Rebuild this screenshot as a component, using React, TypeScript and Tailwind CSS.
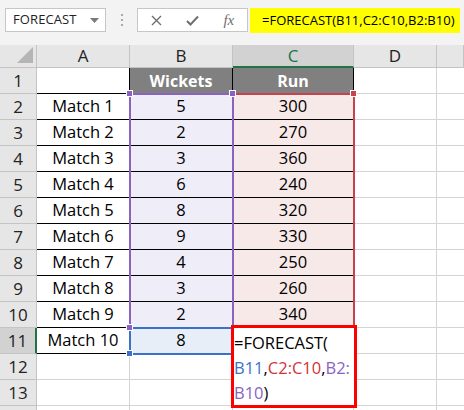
import React from "react";

const data: [string, string, string][] = [
  ["", "Wickets", "Run"],
  ["Match 1", "5", "300"],
  ["Match 2", "2", "270"],
  ["Match 3", "3", "360"],
  ["Match 4", "6", "240"],
  ["Match 5", "8", "320"],
  ["Match 6", "9", "330"],
  ["Match 7", "4", "250"],
  ["Match 8", "3", "260"],
  ["Match 9", "2", "340"],
  ["Match 10", "8", ""],
];

const columns = ["A", "B", "C", "D", ""];

function Handle({ className }: { className: string }) {
  return <div className={`absolute w-[7px] h-[7px] border border-white ${className}`} />;
}

function Toolbar() {
  return (
    <div className="h-[45px] bg-[#f3f3f3] flex items-start pt-2 pl-[5px] font-['Open_Sans',sans-serif]">
      {/* name box */}
      <div className="w-[101px] h-[24px] bg-white border border-[#c6c6c6] flex items-center justify-between pl-[7px] pr-[6px]">
        <span className="text-[13px] text-[#222] tracking-[0.1px]">FORECAST</span>
        <svg width="9" height="5" viewBox="0 0 9 5">
          <path d="M0 0h9L4.5 5z" fill="#7a7a7a" />
        </svg>
      </div>
      <div className="w-[31px] h-[24px] flex flex-col items-center justify-center gap-[3px]">
        <span className="w-[2px] h-[2px] bg-[#a9a9a9]" />
        <span className="w-[2px] h-[2px] bg-[#a9a9a9]" />
        <span className="w-[2px] h-[2px] bg-[#a9a9a9]" />
      </div>
      {/* cancel / enter / fx */}
      <div className="w-[111px] h-[24px] bg-white border border-[#c6c6c6] flex items-center">
        <div className="w-[37px] flex justify-center">
          <svg width="11" height="11" viewBox="0 0 11 11">
            <path d="M1 1l9 9M10 1l-9 9" stroke="#6f6f6f" strokeWidth="1.4" />
          </svg>
        </div>
        <div className="w-[37px] flex justify-center">
          <svg width="13" height="11" viewBox="0 0 13 11">
            <path d="M1 6l3.5 3.5L12 1.5" stroke="#6f6f6f" strokeWidth="2" fill="none" />
          </svg>
        </div>
        <div className="w-[37px] flex justify-center">
          <span className="font-['Liberation_Serif',serif] italic text-[15px] text-[#6f6f6f] leading-none">
            fx
          </span>
        </div>
      </div>
      <div className="ml-[2px] w-[210px] h-[25px] bg-[#ffff00] flex items-center pl-[12px]">
        <span className="text-[13px] text-black whitespace-nowrap">=FORECAST(B11,C2:C10,B2:B10)</span>
      </div>
    </div>
  );
}

function Sheet() {
  const rows = Array.from({ length: 14 }, (_, i) => i + 1);
  return (
    <div className="relative grid grid-cols-[37px_93px_103px_121px_83px_27px] grid-rows-[23px_repeat(14,26px)] font-['Open_Sans',sans-serif]">
      {/* corner */}
      <div className="bg-[#e6e6e6] border-r border-b border-[#c4c4c4] flex items-end justify-end pr-[3px] pb-[4px]">
        <svg width="16" height="16" viewBox="0 0 16 16">
          <path d="M16 0V16H0z" fill="#b5b5b5" />
        </svg>
      </div>
      {columns.map((c, i) => (
        <div
          key={c + i}
          className={
            c === "C"
              ? "bg-[#d2d2d2] border-r border-[#c4c4c4] border-b-2 border-b-[#217346] flex items-center justify-center text-[17px] text-[#217346]"
              : "bg-[#e6e6e6] border-r border-b border-[#c4c4c4] flex items-center justify-center text-[17px] text-[#222]"
          }
        >
          {c}
        </div>
      ))}

      {rows.map((r) => (
        <React.Fragment key={r}>
          <div
            className={
              r === 11
                ? "bg-[#d2d2d2] border-b border-[#c4c4c4] border-r-2 border-r-[#217346] flex items-center justify-center text-[17px] text-[#222]"
                : "bg-[#e6e6e6] border-r border-b border-[#c4c4c4] flex items-center justify-center text-[17px] text-[#222]"
            }
          >
            {r < 14 ? r : ""}
          </div>
          {[0, 1, 2].map((ci) => {
            const row = data[r - 1];
            if (!row) {
              return <div key={ci} className="border-r border-b border-[#d4d4d4]" />;
            }
            const text = row[ci];
            let cls = "bg-white border-r border-b border-black flex items-center justify-center text-[16.5px] text-black";
            if (r === 1 && ci > 0) {
              cls = "bg-[#808080] border-r border-b border-black flex items-center justify-center text-[16px] font-bold text-white";
            } else if (r >= 2 && r <= 10 && ci === 1) {
              cls = "bg-[#efedf8] border-r border-b border-black flex items-center justify-center text-[16.5px] text-black";
            } else if (r >= 2 && r <= 10 && ci === 2) {
              cls = "bg-[#f8e9e9] border-r border-b border-black flex items-center justify-center text-[16.5px] text-black";
            } else if (r === 11 && ci === 1) {
              cls = "bg-[#e7eef8] border-r border-b border-black flex items-center justify-center text-[16.5px] text-black";
            }
            return (
              <div key={ci} className={cls}>
                {text}
              </div>
            );
          })}
          <div className="border-r border-b border-[#d4d4d4]" />
          <div className="border-b border-[#d4d4d4]" />
        </React.Fragment>
      ))}

      {/* formula reference ranges */}
      <div className="absolute left-[232px] top-[48px] w-[123px] h-[236px] border-2 border-[#c8414b]" />
      <div className="absolute left-[129px] top-[48px] w-[105px] h-[236px] border-2 border-[#8a63c2]" />
      <div className="absolute left-[129px] top-[282px] w-[105px] h-[28px] border-2 border-[#3a72c8]" />
      <Handle className="left-[126px] top-[45px] bg-[#8a63c2]" />
      <Handle className="left-[229px] top-[45px] bg-[#8a63c2]" />
      <Handle className="left-[350px] top-[45px] bg-[#c8414b]" />
      <Handle className="left-[126px] top-[279px] bg-[#8a63c2]" />
      <Handle className="left-[126px] top-[305px] bg-[#3a72c8]" />

      {/* in-cell editor */}
      <div className="absolute left-[231px] top-[280px] w-[126px] h-[83px] border-[3px] border-[#ff0000] bg-white pt-[2px] text-[16.5px] leading-[25px] text-black whitespace-nowrap">
        <div>=FORECAST(</div>
        <div>
          <span className="text-[#3a72c8]">B11</span>,<span className="text-[#d13438]">C2:C10</span>,
          <span className="text-[#8a63c2]">B2:</span>
        </div>
        <div>
          <span className="text-[#8a63c2]">B10</span>)
        </div>
      </div>
    </div>
  );
}

export default function App() {
  return (
    <div className="w-[464px] h-[410px] overflow-hidden bg-white">
      <Toolbar />
      <Sheet />
    </div>
  );
}
